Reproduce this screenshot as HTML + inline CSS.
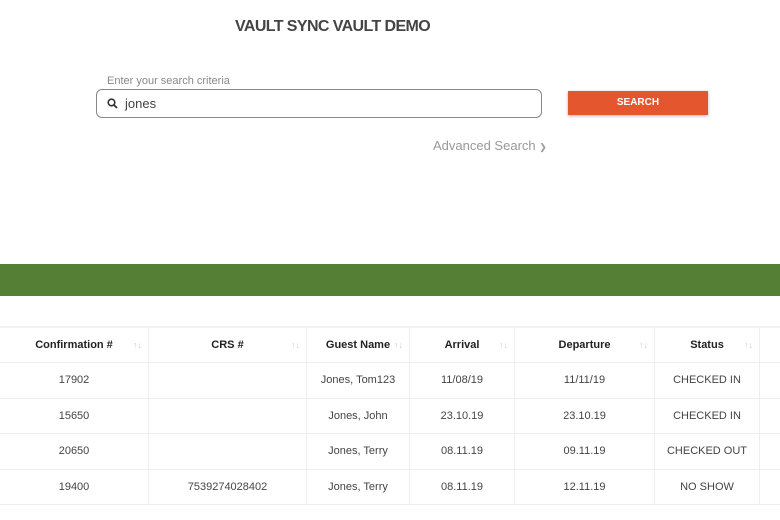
<!DOCTYPE html>
<html><head><style>
*{box-sizing:border-box;margin:0;padding:0}
body{width:780px;height:520px;background:#fff;font-family:"Liberation Sans",sans-serif;position:relative;overflow:hidden;color:#333}
.t{position:absolute;left:235px;top:18px;font-size:16px;font-weight:bold;color:#444;letter-spacing:-0.6px;width:192px;white-space:nowrap}
.lbl{position:absolute;left:107px;top:75px;font-size:11px;color:#888}
.inp{position:absolute;left:96px;top:89px;width:446px;height:29px;border:1px solid #888;border-radius:6px}
.inp span{position:absolute;left:28px;top:6px;font-size:13px;color:#444}
.btn{position:absolute;left:568px;top:91px;width:140px;height:24px;background:#e4572e;color:#fff;font-size:10px;font-weight:bold;text-align:center;line-height:24px;box-shadow:0 1px 3px rgba(0,0,0,.3)}
.adv{position:absolute;left:433px;top:138px;font-size:13px;color:#999}
.g{position:absolute;left:0;top:264px;width:780px;height:32px;background:#547f35}
table{position:absolute;left:-1px;top:326px;width:782px;table-layout:fixed;border-collapse:collapse;font-size:11px;color:#444}
td,th{border:1px solid #eee;text-align:center;height:35.5px;position:relative}
th{font-weight:bold;color:#222;font-size:11px}
th i{position:absolute;right:6px;top:12px;font-style:normal;color:#ccc;font-size:9px}
tr:first-child th{border-top:2px solid #f2f2f2}
</style></head><body>
<div class="t">VAULT SYNC VAULT DEMO</div>
<div class="lbl">Enter your search criteria</div>
<div class="inp"><svg style="position:absolute;left:10px;top:8px" width="11" height="11" viewBox="0 0 11 11"><circle cx="4.5" cy="4.5" r="3.3" fill="none" stroke="#333" stroke-width="1.6"/><line x1="7" y1="7" x2="10" y2="10" stroke="#333" stroke-width="1.8"/></svg><span>jones</span></div>
<div class="btn">SEARCH</div>
<div class="adv">Advanced Search <span style="font-size:9px">&#10095;</span></div>
<div class="g"></div>
<table>
<colgroup><col style="width:149px"><col style="width:158px"><col style="width:103px"><col style="width:105px"><col style="width:140px"><col style="width:105px"><col style="width:22px"></colgroup>
<tr><th>Confirmation #<i>↑↓</i></th><th>CRS #<i>↑↓</i></th><th>Guest Name<i>↑↓</i></th><th>Arrival<i>↑↓</i></th><th>Departure<i>↑↓</i></th><th>Status<i>↑↓</i></th><th></th></tr>
<tr><td>17902</td><td></td><td>Jones, Tom123</td><td>11/08/19</td><td>11/11/19</td><td>CHECKED IN</td><td></td></tr>
<tr><td>15650</td><td></td><td>Jones, John</td><td>23.10.19</td><td>23.10.19</td><td>CHECKED IN</td><td></td></tr>
<tr><td>20650</td><td></td><td>Jones, Terry</td><td>08.11.19</td><td>09.11.19</td><td>CHECKED OUT</td><td></td></tr>
<tr><td>19400</td><td>7539274028402</td><td>Jones, Terry</td><td>08.11.19</td><td>12.11.19</td><td>NO SHOW</td><td></td></tr>
</table>
</body></html>
